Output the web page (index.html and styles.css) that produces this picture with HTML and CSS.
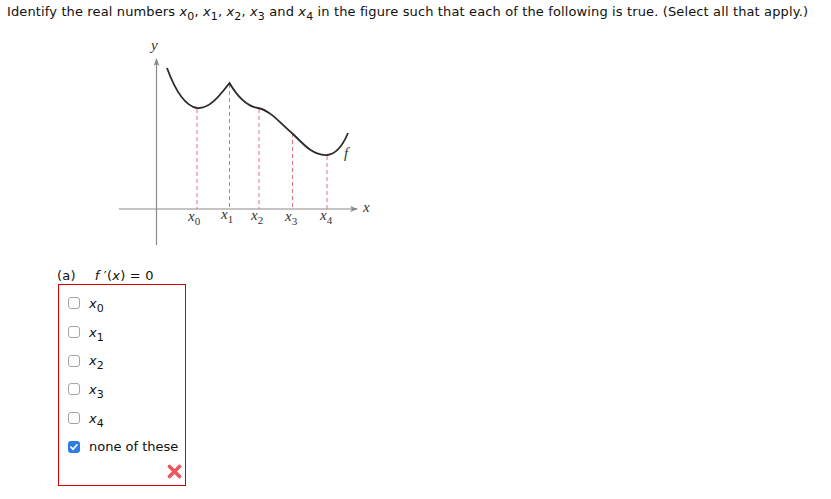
FILE: index.html
```html
<!DOCTYPE html>
<html>
<head>
<meta charset="utf-8">
<link rel="stylesheet" href="styles.css">
</head>
<body>
<p class="prompt">Identify the real numbers <i class="v">x</i><sub>0</sub>, <i class="v">x</i><sub>1</sub>, <i class="v">x</i><sub>2</sub>, <i class="v">x</i><sub>3</sub> and <i class="v">x</i><sub>4</sub> in the figure such that each of the following is true. (Select all that apply.)</p>
<svg class="figure" width="270" height="215" viewBox="110 35 270 215">
  <defs>
    <marker id="ah" markerWidth="8" markerHeight="6" refX="7" refY="3" orient="auto" markerUnits="userSpaceOnUse">
      <path d="M0,0 L8,3 L0,6 L2,3 Z" fill="#8a8a8a"/>
    </marker>
  </defs>
  <line x1="119" y1="209" x2="357" y2="209" stroke="#8a8a8a" stroke-width="1.2" marker-end="url(#ah)"/>
  <line x1="156.5" y1="245" x2="156.5" y2="59" stroke="#8a8a8a" stroke-width="1.2" marker-end="url(#ah)"/>
  <g stroke="#e8707a" stroke-width="1" stroke-dasharray="4,3">
    <line x1="197" y1="109" x2="197" y2="209"/>
    <line x1="229.5" y1="84" x2="229.5" y2="209"/>
    <line x1="259" y1="109" x2="259" y2="209"/>
    <line x1="292.5" y1="133" x2="292.5" y2="209"/>
    <line x1="327" y1="156" x2="327" y2="209"/>
  </g>
  <path d="M167,68 C175,90 185,106 197,108 C210,109 220,95 229.5,83 C237,96 246,106 258,108 C270,110 281,124 293,134 C305,146 314,156 327,155 C337,154 343,145 348,133" fill="none" stroke="#2a2a2a" stroke-width="1.8"/>
  <g class="lbl">
    <text x="151" y="50" class="it">y</text>
    <text x="363" y="212" class="it">x</text>
    <text x="344" y="158" class="it">f</text>
    <text x="188" y="221" class="it">x<tspan class="sb" dy="4">0</tspan></text>
    <text x="221" y="219" class="it">x<tspan class="sb" dy="4">1</tspan></text>
    <text x="251" y="220" class="it">x<tspan class="sb" dy="4">2</tspan></text>
    <text x="285" y="221" class="it">x<tspan class="sb" dy="4">3</tspan></text>
    <text x="320" y="220" class="it">x<tspan class="sb" dy="4">4</tspan></text>
  </g>
</svg>
<div class="part">
  <div class="part-label"><span class="pl">(a)</span><span><i class="v">f</i> ′(<i class="v">x</i>) = 0</span></div>
  <div class="answer-box">
    <label class="opt"><span class="cb"></span><span><i class="v">x</i><sub>0</sub></span></label>
    <label class="opt"><span class="cb"></span><span><i class="v">x</i><sub>1</sub></span></label>
    <label class="opt"><span class="cb"></span><span><i class="v">x</i><sub>2</sub></span></label>
    <label class="opt"><span class="cb"></span><span><i class="v">x</i><sub>3</sub></span></label>
    <label class="opt"><span class="cb"></span><span><i class="v">x</i><sub>4</sub></span></label>
    <label class="opt"><span class="cb checked"><svg width="12" height="12" viewBox="0 0 12 12"><path d="M3,6.2 L5.1,8.3 L9,3.8" fill="none" stroke="#fff" stroke-width="1.7" stroke-linecap="round" stroke-linejoin="round"/></svg></span><span>none of these</span></label>
    <div class="mark"><svg width="15" height="15" viewBox="0 0 15 15"><path d="M2.5,2.5 L12.5,12.5 M12.5,2.5 L2.5,12.5" stroke="#f0545c" stroke-width="3.6" stroke-linecap="round"/></svg></div>
  </div>
</div>
</body>
</html>
```
FILE: styles.css
```css
body {
  margin: 0;
  font-family: "DejaVu Sans", Verdana, sans-serif;
  font-size: 13px;
  color: #111;
  background: #fff;
}
.prompt {
  margin: 0;
  padding: 4px 0 0 7px;
  line-height: 16px;
  white-space: nowrap;
  letter-spacing: 0.13px;
}
.v {
  font-style: italic;
}
sub {
  font-size: 11px;
  vertical-align: -4px;
  line-height: 0;
}
.figure {
  display: block;
  margin: 15px 0 0 110px;
}
.lbl text {
  font-family: "Liberation Serif", "Times New Roman", serif;
  font-size: 15px;
  fill: #333;
}
.lbl .it {
  font-style: italic;
}
.lbl .sb {
  font-style: normal;
  font-size: 11px;
}
.part {
  margin: 18px 0 0 57px;
}
.part-label {
  display: flex;
  gap: 19px;
  line-height: 16px;
  letter-spacing: 0.2px;
}
.answer-box {
  box-sizing: border-box;
  width: 128px;
  height: 202px;
  margin: 0 0 0 1px;
  border: 1px solid #d40000;
  padding: 4px 0 0 9px;
  position: relative;
}
.opt {
  display: flex;
  align-items: center;
  gap: 9px;
  height: 28.7px;
}
.cb {
  box-sizing: border-box;
  width: 12px;
  height: 12px;
  border: 1px solid #a5a5a5;
  border-radius: 3px;
  flex: none;
  display: flex;
}
.cb.checked {
  border: none;
  background: #2f7de1;
}
.mark {
  position: absolute;
  right: 3px;
  bottom: 6px;
  width: 15px;
  height: 15px;
}
```
